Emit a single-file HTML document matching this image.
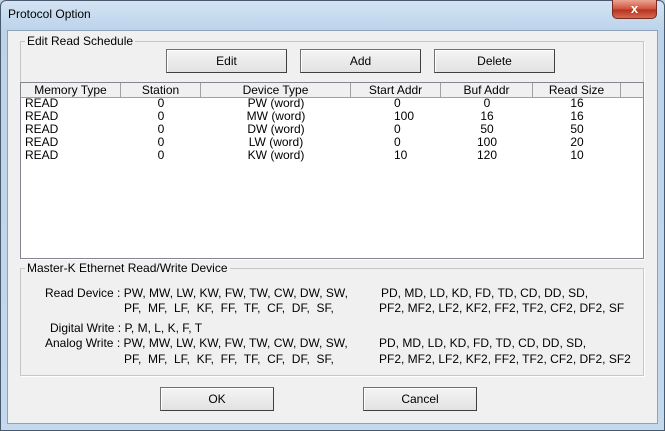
<!DOCTYPE html><html><head><style>
*{margin:0;padding:0;box-sizing:border-box}
body{width:665px;height:431px;overflow:hidden;background:#bcd3ea;font-family:"Liberation Sans",sans-serif;font-size:12px;color:#000;position:relative}
.frame{position:absolute;left:0;top:0;width:665px;height:431px;border:1px solid #4a5a6e;border-radius:6px 6px 0 0;background:linear-gradient(#d3e3f4,#bcd3ea 30px,#c4d8ee)}
.title{position:absolute;left:8px;top:7px;font-size:12px;color:#000}
.close{position:absolute;left:612px;top:0;width:45px;height:19px;border:1px solid #7a2b20;border-top:none;border-radius:0 0 5px 5px;background:linear-gradient(#e9a592,#d0523c 50%,#b83220 55%,#d56a50);color:#fff;font-weight:bold;text-align:center;font-size:13px;line-height:17px}
.client{position:absolute;left:7px;top:30px;width:651px;height:394px;background:#f0f0f0;border:1px solid #8ea3ba}
.grp{position:absolute;border:1px solid #c6c6c6;box-shadow:1px 1px 0 #fff}
.lg{position:absolute;background:#f0f0f0;padding:0 2px;top:-8px;left:4px;white-space:nowrap}
.btn{position:absolute;height:24px;background:linear-gradient(#f4f4f4,#e2e2e2);border:1px solid #707070;border-right-color:#404040;border-bottom-color:#404040;text-align:center;line-height:22px;box-shadow:inset 1px 1px 0 #fff}
.list{position:absolute;left:20px;top:82px;width:624px;height:177px;background:#fff;border:1px solid #828790}
.hd{position:absolute;top:0;height:15px;background:#f0f0f0;border-right:1px solid #a0a0a0;border-bottom:1px solid #a0a0a0;text-align:center;line-height:14px}
.r{position:absolute;line-height:13px;text-align:center}
.t{position:absolute;white-space:pre;line-height:14px}
</style></head><body>
<div class="frame"></div>
<div class="title">Protocol Option</div>
<div class="close">x</div>
<div class="client"></div>
<div class="grp" style="left:20px;top:41px;width:624px;height:218px"><span class="lg">Edit Read Schedule</span></div>
<div class="btn" style="left:166px;top:49px;width:121px">Edit</div>
<div class="btn" style="left:300px;top:49px;width:121px">Add</div>
<div class="btn" style="left:434px;top:49px;width:121px">Delete</div>
<div class="list">
<div class="hd" style="left:0;width:100px">Memory Type</div>
<div class="hd" style="left:100px;width:80px">Station</div>
<div class="hd" style="left:180px;width:150px">Device Type</div>
<div class="hd" style="left:330px;width:90px">Start Addr</div>
<div class="hd" style="left:420px;width:92px">Buf Addr</div>
<div class="hd" style="left:512px;width:88px">Read Size</div>
<div class="hd" style="left:600px;width:22px;border-right:none"></div>
<div class="r" style="left:4px;top:14px;text-align:left">READ<br>READ<br>READ<br>READ<br>READ</div>
<div class="r" style="left:100px;width:80px;top:14px">0<br>0<br>0<br>0<br>0</div>
<div class="r" style="left:180px;width:150px;top:14px">PW (word)<br>MW (word)<br>DW (word)<br>LW (word)<br>KW (word)</div>
<div class="r" style="left:330px;width:90px;top:14px;text-align:left;padding-left:43px">0<br>100<br>0<br>0<br>10</div>
<div class="r" style="left:420px;width:92px;top:14px">0<br>16<br>50<br>100<br>120</div>
<div class="r" style="left:512px;width:88px;top:14px">16<br>16<br>50<br>20<br>10</div>
</div>
<div class="grp" style="left:20px;top:268px;width:624px;height:108px"><span class="lg">Master-K Ethernet Read/Write Device</span></div>
<div class="t" style="left:45px;top:286px">Read Device : PW, MW, LW, KW, FW, TW, CW, DW, SW,</div>
<div class="t" style="left:381px;top:286px">PD, MD, LD, KD, FD, TD, CD, DD, SD,</div>
<div class="t" style="left:124px;top:301px">PF,  MF,  LF,  KF,  FF,  TF,  CF,  DF,  SF,</div>
<div class="t" style="left:379px;top:301px">PF2, MF2, LF2, KF2, FF2, TF2, CF2, DF2, SF</div>
<div class="t" style="left:50px;top:321px">Digital Write : P, M, L, K, F, T</div>
<div class="t" style="left:45px;top:336px">Analog Write : PW, MW, LW, KW, FW, TW, CW, DW, SW,</div>
<div class="t" style="left:379px;top:336px">PD, MD, LD, KD, FD, TD, CD, DD, SD,</div>
<div class="t" style="left:124px;top:352px">PF,  MF,  LF,  KF,  FF,  TF,  CF,  DF,  SF,</div>
<div class="t" style="left:379px;top:352px">PF2, MF2, LF2, KF2, FF2, TF2, CF2, DF2, SF2</div>
<div class="btn" style="left:160px;top:387px;width:114px">OK</div>
<div class="btn" style="left:363px;top:387px;width:114px">Cancel</div>
</body></html>
